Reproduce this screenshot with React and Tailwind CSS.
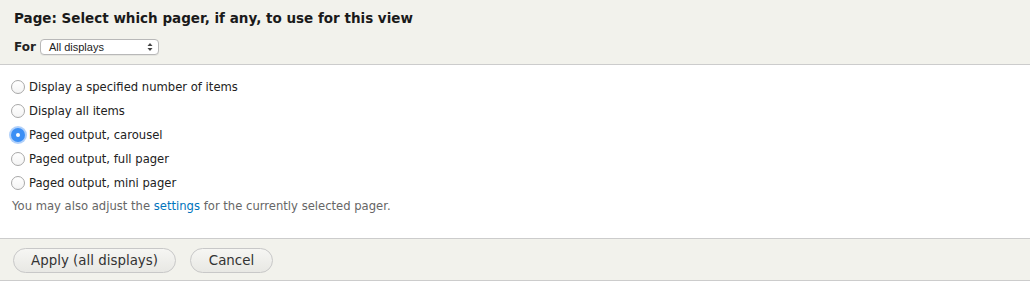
import React from "react";

const font = { fontFamily: '"DejaVu Sans", Verdana, sans-serif' };

function Radio({ checked }) {
  if (checked) {
    return (
      <span className="relative flex h-[14px] w-[14px] shrink-0 items-center justify-center rounded-full bg-[#3b8ff5] shadow-[0_0_0_2px_rgba(80,150,245,0.45)]">
        <span className="h-[4px] w-[4px] rounded-full bg-white" />
      </span>
    );
  }
  return (
    <span className="h-[14px] w-[14px] shrink-0 rounded-full border border-[#a8a8a8] bg-gradient-to-b from-white to-[#f4f4f4]" />
  );
}

const options = [
  "Display a specified number of items",
  "Display all items",
  "Paged output, carousel",
  "Paged output, full pager",
  "Paged output, mini pager",
];

export default function App() {
  return (
    <div className="h-[281px] w-[1030px] bg-white text-[#222]" style={font}>
      <div className="h-[65px] border-b border-[#cccccc] bg-[#f2f2ec] px-[14px] pt-[8px]">
        <h1 className="text-[13.5px] font-bold leading-[20px] text-[#1a1a1a]">
          Page: Select which pager, if any, to use for this view
        </h1>
        <div className="mt-[11px] flex items-center">
          <span className="text-[12px] font-bold leading-[16px]">For</span>
          <div className="ml-[4px] flex h-[16px] w-[119px] items-center justify-between rounded-[4px] border border-[#b8b8b8] bg-white pl-[8px] pr-[5px] shadow-[0_1px_0_rgba(0,0,0,0.05)]">
            <span className="text-[11px] leading-[14px] text-[#222]" style={{ fontFamily: '"Liberation Sans", Arial, sans-serif' }}>All displays</span>
            <svg width="6" height="10" viewBox="0 0 6 10">
              <path d="M3 1 L5.5 4 L0.5 4 Z" fill="#444" />
              <path d="M3 9 L5.5 6 L0.5 6 Z" fill="#444" />
            </svg>
          </div>
        </div>
      </div>
      <div className="h-[174px] border-b border-[#cccccc] bg-white pl-[11px] pt-[13px]">
        <div className="flex flex-col gap-[6px]">
          {options.map((o, i) => (
            <div key={o} className="flex h-[18px] items-center">
              <Radio checked={i === 2} />
              <span className="ml-[4px] text-[11.6px] leading-[18px] text-[#222]">{o}</span>
            </div>
          ))}
        </div>
        <p className="ml-[1px] mt-[6px] text-[11.6px] leading-[16px] text-[#666]">
          You may also adjust the <span className="text-[#0074bd]">settings</span> for the currently selected pager.
        </p>
      </div>
      <div className="flex h-[42px] items-start gap-[14px] border-b border-[#cccccc] bg-[#f2f2ec] pl-[13px] pt-[9px]">
        <button className="h-[25px] w-[163px] rounded-full border border-[#c8c8c8] bg-gradient-to-b from-[#f6f6f3] to-[#e8e8e4] text-[13.4px] leading-[22px] text-[#333]" style={font}>
          Apply (all displays)
        </button>
        <button className="h-[25px] w-[83px] rounded-full border border-[#c8c8c8] bg-gradient-to-b from-[#f6f6f3] to-[#e8e8e4] text-[13.4px] leading-[22px] text-[#333]" style={font}>
          Cancel
        </button>
      </div>
    </div>
  );
}
